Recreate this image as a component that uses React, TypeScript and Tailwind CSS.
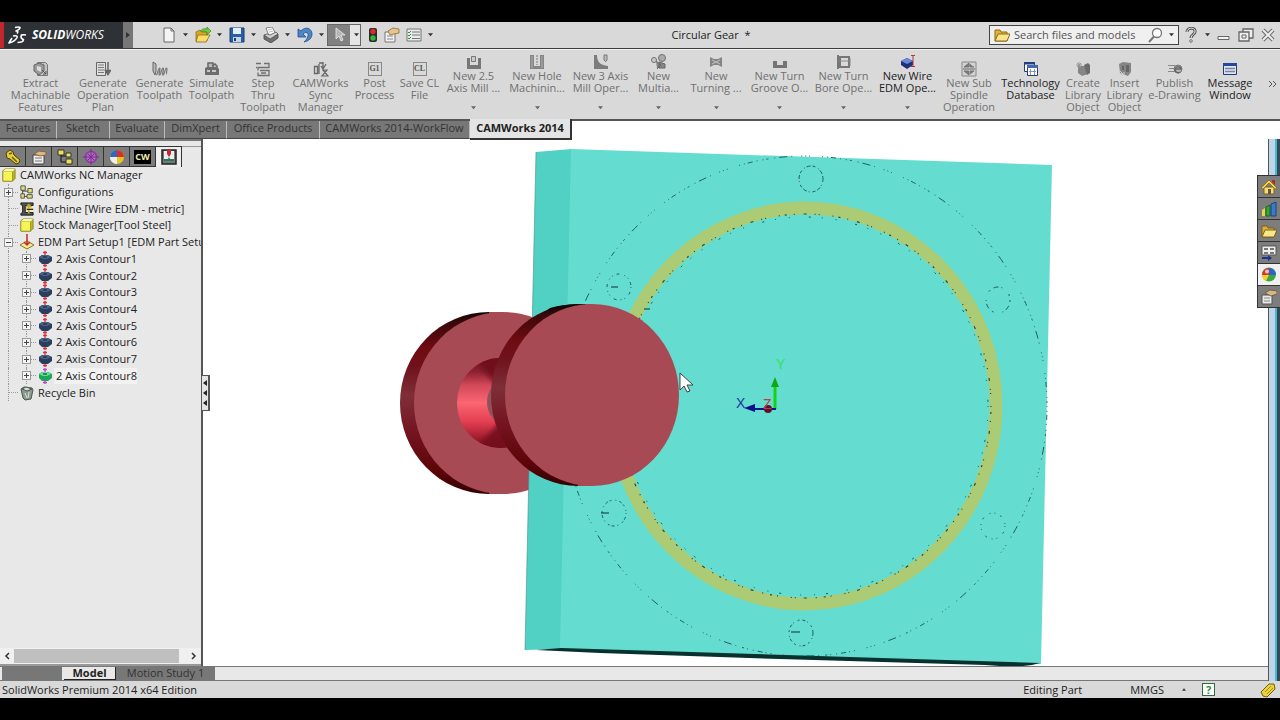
import type { ReactNode } from 'react'

type Tool = {
  icon: string
  lines: string[]
  width: string
  menu?: boolean
  enabled?: boolean
}

const tools: Tool[] = [
  { icon: 'extract', lines: ['Extract', 'Machinable', 'Features'], width: 'w-[65px]' },
  { icon: 'plan', lines: ['Generate', 'Operation', 'Plan'], width: 'w-[60px]' },
  { icon: 'toolpath', lines: ['Generate', 'Toolpath'], width: 'w-[53px]' },
  { icon: 'simulate', lines: ['Simulate', 'Toolpath'], width: 'w-[51px]' },
  { icon: 'step', lines: ['Step', 'Thru', 'Toolpath'], width: 'w-[52px]' },
  { icon: 'sync', lines: ['CAMWorks', 'Sync', 'Manager'], width: 'w-[63px]' },
  { icon: 'post', lines: ['Post', 'Process'], width: 'w-[45px]' },
  { icon: 'savecl', lines: ['Save CL', 'File'], width: 'w-[45px]' },
  { icon: 'mill25', lines: ['New 2.5', 'Axis Mill ...'], width: 'w-[63px]', menu: true },
  { icon: 'hole', lines: ['New Hole', 'Machinin...'], width: 'w-[64px]', menu: true },
  { icon: 'mill3', lines: ['New 3 Axis', 'Mill Oper...'], width: 'w-[63px]', menu: true },
  { icon: 'multi', lines: ['New', 'Multia...'], width: 'w-[53px]', menu: true },
  { icon: 'turning', lines: ['New', 'Turning ...'], width: 'w-[62px]', menu: true },
  { icon: 'groove', lines: ['New Turn', 'Groove O...'], width: 'w-[65px]', menu: true },
  { icon: 'bore', lines: ['New Turn', 'Bore Ope...'], width: 'w-[63px]', menu: true },
  { icon: 'edm', lines: ['New Wire', 'EDM Ope...'], width: 'w-[65px]', menu: true, enabled: true },
  { icon: 'spindle', lines: ['New Sub', 'Spindle', 'Operation'], width: 'w-[58px]' },
  { icon: 'database', lines: ['Technology', 'Database'], width: 'w-[65px]', enabled: true },
  { icon: 'create', lines: ['Create', 'Library', 'Object'], width: 'w-[40px]' },
  { icon: 'insert', lines: ['Insert', 'Library', 'Object'], width: 'w-[43px]' },
  { icon: 'publish', lines: ['Publish', 'e-Drawing'], width: 'w-[57px]' },
  { icon: 'message', lines: ['Message', 'Window'], width: 'w-[54px]', enabled: true },
]

const tabs = [
  { label: 'Features', width: 'w-[57px]' },
  { label: 'Sketch', width: 'w-[53px]' },
  { label: 'Evaluate', width: 'w-[55px]' },
  { label: 'DimXpert', width: 'w-[62px]' },
  { label: 'Office Products', width: 'w-[93px]' },
  { label: 'CAMWorks 2014-WorkFlow', width: 'w-[150px]' },
]

const contours = [1, 2, 3, 4, 5, 6, 7, 8]

const toolIcons: Record<string, ReactNode> = {
  extract: (
    <>
      <path d="M4.5 1.5h8l2 2v11h-10z" fill="#c4c4c4" stroke="#777" />
      <path d="M1 4l5-2 5 2v6l-5 4-5-4z" fill="#9a9a9a" stroke="#666" />
      <path d="M4 5l4 1v5l-4-2z" fill="#dcdcdc" />
      <path d="M9 9l4 4M13 10v3h-3" fill="none" stroke="#555" />
    </>
  ),
  plan: (
    <>
      <path d="M1.5 1.5h9v13h-9z" fill="#e0e0e0" stroke="#666" />
      <path d="M3 4h6M3 6.5h6M3 9h6M3 11.5h6" stroke="#777" />
      <path d="M13 1v9M10.5 9.5l2.5 4 2.5-4z" fill="#666" stroke="#666" strokeWidth="1.5" />
    </>
  ),
  toolpath: (
    <>
      <path d="M1 1v9l2 4 1-4V3z" fill="#bbb" stroke="#666" />
      <path
        d="M4 14c2 0 2-7 3.500-7s-1.500 7 0 7 2-7 3.500-7-1.500 7 0 7 2-7 3.500-7-1 6 .5 6"
        fill="none"
        stroke="#777"
        strokeWidth="1.2"
      />
    </>
  ),
  simulate: (
    <>
      <path d="M4 6V2h5v4M8 5l3-2 2 2v3" fill="#bbb" stroke="#666" strokeWidth="1.5" />
      <path d="M1 7l2-1h10l2 2v6H1z" fill="#6d6d6d" />
      <path d="M3 9h3v2H3zM8 9h4v2H8z" fill="#c8c8c8" />
    </>
  ),
  step: (
    <path
      d="M1 2.500h5M9 2.500h5v4H3v3M1 6.500h1M5 9.500h9v5H3v-3M6 12h5"
      fill="none"
      stroke="#707070"
      strokeWidth="1.3"
    />
  ),
  sync: (
    <>
      <path d="M1.500 5.500h3v7h-3zM6 3v10M6 2h4M10 1v7l-2-3M10 8l3-5" fill="none" stroke="#666" strokeWidth="1.3" />
      <path d="M9 9h5l-5 6h6l-5-6" fill="none" stroke="#666" strokeWidth="1.2" />
    </>
  ),
  mill25: (
    <>
      <path d="M1 4h3v7h8V4h3v11H1z" fill="#777" />
      <path d="M5.500 2.500h4v5h-4z" fill="#ccc" stroke="#777" />
    </>
  ),
  hole: (
    <>
      <path d="M1 1h4v11h6V1h4v14H1z" fill="#858585" />
      <path d="M8 1v10" stroke="#777" strokeDasharray="2 1" />
      <path d="M3 2v12M13 2v12" stroke="#b0b0b0" />
    </>
  ),
  mill3: (
    <>
      <path d="M1 1h3c0 7 3 10 11 11v3H1z" fill="#7c7c7c" />
      <path d="M11 1h3v5q-1 3-3 0z" fill="#bbb" stroke="#777" />
    </>
  ),
  multi: (
    <>
      <circle cx="11" cy="4" r="3.5" fill="#aaa" stroke="#707070" />
      <circle cx="3" cy="6" r="2.5" fill="#ccc" stroke="#707070" />
      <path d="M5 7l5 4-4 4M8 8l6 2v4H8z" fill="#888" stroke="#666" />
    </>
  ),
  turning: (
    <>
      <path d="M2 3l4 2h4l4-2v10l-4-2H6l-4 2z" fill="#848484" />
      <path d="M4 6l8 4M12 6l-8 4" stroke="#c4c4c4" />
    </>
  ),
  groove: <path d="M1 7h4v4h6V7h4v7H1z" fill="#747474" />,
  bore: (
    <>
      <path d="M2 1v14M4 3h9v10H4z" fill="none" stroke="#777" strokeWidth="2" />
      <path d="M3 7h10M14 4v8" stroke="#8a8a8a" />
    </>
  ),
  edm: (
    <>
      <path d="M1 7l6-3 6 3v4l-6 4-6-4z" fill="#1e2f73" />
      <path d="M1 7l6-3 6 3-6 3z" fill="#6c86d8" />
      <path d="M11 1.500h4M13 1v12M11 12.500h4" stroke="#b7303a" fill="none" />
    </>
  ),
  spindle: (
    <>
      <path d="M1 1h14v14H1z" fill="#d2d2d2" stroke="#888" />
      <path d="M8 2v4H3zM13 6H9V3M3 10h5v4zM9 10h4l-4 3" fill="#777" stroke="#777" />
      <path d="M2 8h12" stroke="#666" />
    </>
  ),
  database: (
    <>
      <path d="M1.500 1.500h10v9h-10z" fill="#fff" stroke="#263e7d" />
      <path d="M1 1h11v2.500H1z" fill="#263e7d" />
      <path d="M4.500 4.500h10v10h-10z" fill="#fff" stroke="#263e7d" />
      <path d="M4 4h11v3H4z" fill="#4566b0" />
      <path d="M7.500 8v6M11.500 8v6M6 10.500h7" stroke="#8391ba" />
    </>
  ),
  create: (
    <>
      <path d="M3 5h11l-1 8-6 2-4-3z" fill="#858585" />
      <path d="M9 4l4-2 2 2v8l-3 2z" fill="#6c6c6c" />
      <path d="M4 1v6M1 4h6M2 2l4 4M6 2L2 6" stroke="#999" />
    </>
  ),
  insert: (
    <>
      <path d="M2 3l4-2 8 1v9l-3 4-8-3z" fill="#858585" />
      <path d="M5 5h2v4H5zM9 4h3v7H9z" fill="#666" />
      <path d="M2 9l5 5M7 11v3H4" stroke="#ccc" fill="none" />
    </>
  ),
  publish: (
    <>
      <path d="M1 4.500h7M2 7.500h6M1 10.500h7" stroke="#888" />
      <circle cx="11" cy="8" r="4" fill="#b8b8b8" stroke="#777" />
      <path d="M8 8h6a3 3 0 1 0-1 3" fill="none" stroke="#666" strokeWidth="1.5" />
    </>
  ),
  message: (
    <>
      <path d="M1.500 2.500h13v11h-13z" fill="#dfe4ef" stroke="#23396f" />
      <path d="M1 2h14v3H1z" fill="#27489c" />
      <path d="M3 7.500h10M3 10.500h10" stroke="#7484a8" strokeWidth="1.5" />
    </>
  ),
}

function Icon({ children, className = 'size-4' }: { children: ReactNode; className?: string }) {
  return (
    <svg viewBox="0 0 16 16" className={`shrink-0 ${className}`} aria-hidden="true">
      {children}
    </svg>
  )
}

function Caret({ className = 'text-[#333]' }: { className?: string }) {
  return (
    <svg viewBox="0 0 6 4" className={`h-1 w-[5px] shrink-0 ${className}`} aria-hidden="true">
      <path d="M0 0h6L3 3.500z" fill="currentColor" />
    </svg>
  )
}

const quickActions: { name: string; drawing: ReactNode }[] = [
  {
    name: 'New',
    drawing: (
      <>
        <path d="M3 1h7l3 3v11H3z" fill="#f4f4f4" stroke="#666" />
        <path d="M10 1v3h3" fill="none" stroke="#666" />
      </>
    ),
  },
  {
    name: 'Open',
    drawing: (
      <>
        <path d="M1 5l4-2 2 2h5v9H1z" fill="#d9a728" stroke="#8d6a14" strokeWidth=".8" />
        <path d="M3 8h12l-4 7H1z" fill="#f8dd6d" stroke="#8d6a14" strokeWidth=".8" />
        <path d="M6 5c0-3 3-4 6-3V0l4 4-4 4V5c-2-1-4-1-6 0z" fill="#6bcb3e" stroke="#2e7d16" strokeWidth=".6" />
      </>
    ),
  },
  {
    name: 'Save',
    drawing: (
      <>
        <path d="M1 1h14v14H1z" fill="#2a5fa5" stroke="#173d72" />
        <path d="M4 1h8v6H4z" fill="#e4edf7" />
        <path d="M4 10h8v5H4z" fill="#c5d3e4" />
        <path d="M5 11h2v3H5z" fill="#173d72" />
      </>
    ),
  },
  {
    name: 'Print',
    drawing: (
      <>
        <path d="M3 1l6-1 4 7-7 2z" fill="#fff" stroke="#666" strokeWidth=".8" />
        <path d="M5 3l4-1M6 5l4-1" stroke="#aaa" strokeWidth=".8" />
        <path d="M1 8l6 3 8-4v4l-7 5-7-4z" fill="#707070" stroke="#444" strokeWidth=".8" />
        <path d="M1 8l3-1 3 1 6-3 2 2-8 5z" fill="#cfcfcf" stroke="#555" strokeWidth=".8" />
      </>
    ),
  },
  {
    name: 'Undo',
    drawing: (
      <path
        d="M1 2v8l8 0-3-3c3-3 6-1 5 2s-2 4-4 6c5-1 8-4 8-8 0-6-7-8-11-3z"
        fill="#4a86c8"
        stroke="#1d4f8d"
        strokeWidth=".8"
      />
    ),
  },
]

function TitleBar() {
  return (
    <header className="flex h-[27px] shrink-0 items-center border-b border-[#3c3c3c] bg-[#d9d9d9]">
      <div className="flex h-full w-[123px] shrink-0 items-center border-l-4 border-[#c1272d] bg-[#2e3236] text-white">
        <svg viewBox="0 0 20 20" className="ml-1 size-5 shrink-0" aria-hidden="true">
          <path
            d="M7 2.500q4-1 5 0q0 2-4 3.500q3 0 1 2.500M5 11q5-1 4 1.500q-2 4-8 5.500l3-5M18 10q-5-1-5 1.500t2.500 3q0 3-6 3"
            fill="none"
            stroke="#fff"
            strokeWidth="1.6"
            strokeLinejoin="round"
          />
        </svg>
        <span className="ml-1 text-[12px] italic">
          <b>SOLID</b>WORKS
        </span>
      </div>
      <button className="flex h-full w-[10px] shrink-0 items-center justify-center bg-[#777]" aria-label="Show menu">
        <svg viewBox="0 0 4 6" className="h-1.5 w-1">
          <path d="M0 0l4 3-4 3z" fill="#333" />
        </svg>
      </button>
      <div className="ml-7 flex h-full shrink-0 items-center">
        {quickActions.map((a) => (
          <button key={a.name} aria-label={a.name} className="flex w-[34px] items-center gap-1.5">
            <Icon>{a.drawing}</Icon>
            <Caret />
          </button>
        ))}
        <button
          aria-label="Select"
          className="mr-1 -ml-1 flex h-[22px] w-[34px] items-center border border-[#666] bg-[#e4e4e4]"
        >
          <span className="mr-1 flex h-full w-[22px] items-center justify-center bg-[#818181]">
            <Icon>
              <path d="M5 1v11l3-3 2 5 2-1-2-5h4z" fill="#b5b5b5" stroke="#eee" strokeWidth=".8" />
            </Icon>
          </span>
          <Caret />
        </button>
        <button aria-label="Rebuild" className="w-[19px]">
          <Icon>
            <rect x="4" y="1" width="8" height="14" rx="2" fill="#2b2b2b" />
            <circle cx="8" cy="4.5" r="2.7" fill="#d92c22" />
            <circle cx="8" cy="11" r="2.7" fill="#35b53a" />
          </Icon>
        </button>
        <button aria-label="File properties" className="w-[22px]">
          <Icon>
            <path d="M1 5h10v10H1z" fill="#f2f2f2" stroke="#777" />
            <path d="M3 9h6M3 12h6" stroke="#888" />
            <path d="M4 4l5-3 6 1v4l-5 1-4 1z" fill="#e7c58a" stroke="#8d6a35" strokeWidth=".8" />
          </Icon>
        </button>
        <button aria-label="Options" className="flex items-center gap-1.5">
          <Icon>
            <path d="M1 2h14v12H1z" fill="#e6ecea" stroke="#777" />
            <path d="M6 5h8M6 8h8M6 11.500h8" stroke="#777" />
            <path d="M2 5l1 1 2-2M2 8l1 1 2-2M2 11l1 1 2-2" fill="none" stroke="#35903a" />
          </Icon>
          <Caret />
        </button>
      </div>
      <h1 className="flex-1 text-center text-[11px] whitespace-pre text-[#222]">Circular Gear  *</h1>
      <label className="flex h-5 w-[190px] shrink-0 items-center border border-[#444] bg-[#f0f0f0] px-1">
        <Icon>
          <path d="M1 3h5l1 2h6v9H1z" fill="#e2b537" stroke="#8d6a14" />
          <path d="M4 7h12l-3 7H1z" fill="#fbe58c" stroke="#8d6a14" />
        </Icon>
        <input
          type="text"
          aria-label="Search files and models"
          placeholder="Search files and models"
          className="ml-1 min-w-0 flex-1 bg-transparent text-[11px] outline-none placeholder:text-[#555]"
        />
        <Icon>
          <circle cx="10" cy="6" r="4.5" fill="#fff" stroke="#777" strokeWidth="1.3" />
          <path d="M7 9.500L2 15" stroke="#777" strokeWidth="2" />
        </Icon>
        <Caret className="ml-1.5 text-[#333]" />
      </label>
      <div className="flex w-[101px] shrink-0 items-center gap-1.5 pl-1">
        <button aria-label="Help" className="flex items-center gap-1.5">
          <Icon>
            <path d="M4 5c0-5 9-5 8 0 0 2-4 3-4 6" fill="none" stroke="#555" strokeWidth="3" />
            <path d="M4 5c0-5 9-5 8 0 0 2-4 3-4 6" fill="none" stroke="#eee" />
            <circle cx="8" cy="14" r="1.3" fill="#eee" stroke="#555" strokeWidth=".8" />
          </Icon>
          <Caret />
        </button>
        <button aria-label="Minimize">
          <Icon>
            <path d="M2 9.500h11v3H2z" fill="#f4f4f4" stroke="#666" />
          </Icon>
        </button>
        <button aria-label="Restore">
          <Icon>
            <path d="M5 2h10v9H5z" fill="#eee" stroke="#666" strokeWidth="1.3" />
            <path d="M1 5h10v9H1z" fill="#eee" stroke="#666" strokeWidth="1.3" />
            <path d="M4 8h4v3H4z" fill="none" stroke="#666" />
          </Icon>
        </button>
        <button aria-label="Close">
          <Icon>
            <path d="M3 3l10 10M13 3L3 13" stroke="#666" strokeWidth="4" />
            <path d="M3 3l10 10M13 3L3 13" stroke="#eee" strokeWidth="2" />
          </Icon>
        </button>
      </div>
    </header>
  )
}

function ToolButton({ tool }: { tool: Tool }) {
  const badge = tool.icon === 'post' ? 'G1' : tool.icon === 'savecl' ? 'CL' : null
  return (
    <button
      className={`flex shrink-0 flex-col items-center text-[11px] leading-[12px] ${tool.width} ${
        tool.menu ? 'pt-1' : 'pt-[11px]'
      } ${tool.enabled ? 'text-[#222]' : 'text-[#707070]'}`}
    >
      {badge ? (
        <span className="my-px flex size-3.5 items-center justify-center border border-[#888] font-['Liberation_Serif'] text-[8px] font-bold text-[#555]">
          {badge}
        </span>
      ) : (
        <Icon>{toolIcons[tool.icon]}</Icon>
      )}
      {tool.lines.map((line) => (
        <span key={line} className="whitespace-nowrap">
          {line}
        </span>
      ))}
      {tool.menu && <Caret className="mt-3 text-[#666]" />}
    </button>
  )
}

function Ribbon() {
  return (
    <div className="flex h-[70px] shrink-0 items-stretch overflow-hidden border-t border-[#f2f2f2] bg-[#d9d9d9] pl-2">
      {tools.map((t) => (
        <ToolButton key={t.icon} tool={t} />
      ))}
      <button aria-label="More commands" className="ml-auto flex w-3 items-start pt-[30px]">
        <svg viewBox="0 0 10 8" className="h-2 w-2.5">
          <path d="M1 1l3 3-3 3M5 1l3 3-3 3" fill="none" stroke="#555" />
        </svg>
      </button>
    </div>
  )
}

function CommandTabs() {
  return (
    <nav className="flex h-5 shrink-0 border-t-2 border-[#555] bg-white text-[11px] text-[#333]">
      {tabs.map((t) => (
        <button
          key={t.label}
          className={`flex shrink-0 justify-center border-r border-b border-r-[#bbb] border-b-[#444] bg-[#777] leading-[14px] whitespace-nowrap ${t.width}`}
        >
          {t.label}
        </button>
      ))}
      <button className="relative z-10 -mt-0.5 flex h-[21px] w-[102px] shrink-0 justify-center border-r-2 border-b-2 border-[#333] bg-[#e4e4e4] leading-[17px] font-bold text-[#222]">
        CAMWorks 2014
      </button>
    </nav>
  )
}

const cube = (
  <>
    <path d="M1 3l3-2h11v11l-3 3H1z" fill="#b8b42c" stroke="#77741a" strokeWidth=".8" />
    <path d="M1 4h11v11H1z" fill="#f7f556" stroke="#8a871d" strokeWidth=".8" />
    <path d="M1 4l3-3h11l-3 3z" fill="#fcfba0" />
  </>
)

const managerTabs: { name: string; drawing: ReactNode }[] = [
  {
    name: 'FeatureManager',
    drawing: (
      <>
        <path d="M1 4l4-3 3 2 1 3 6 5-1 3-3 1-6-5-3-1z" fill="#e9cf38" stroke="#4b400a" />
        <path d="M4 5l3-1M7 8l5 5" stroke="#6b5c0d" strokeWidth="1.5" />
      </>
    ),
  },
  {
    name: 'PropertyManager',
    drawing: (
      <>
        <path d="M2 6h11v9H2z" fill="#eee" stroke="#444" />
        <path d="M4 9h7M4 12h7" stroke="#777" />
        <path d="M3 5l5-3 7 1v3l-6 1z" fill="#ddb682" stroke="#7c5a2b" strokeWidth=".8" />
      </>
    ),
  },
  {
    name: 'ConfigurationManager',
    drawing: (
      <>
        <path d="M4 4v9h6M4 7h7" fill="none" stroke="#111" />
        <path d="M1 1h6v5H1zM9 4h5v4H9zM9 10h6v5H9z" fill="#ece25a" stroke="#333" />
      </>
    ),
  },
  {
    name: 'DimXpertManager',
    drawing: (
      <>
        <circle cx="8" cy="8" r="5.5" fill="#b56ac2" stroke="#8b3ba0" strokeWidth="1.5" />
        <path d="M8 0v16M0 8h16M5 5l6 6M11 5l-6 6" stroke="#7a2d90" />
      </>
    ),
  },
  {
    name: 'DisplayManager',
    drawing: (
      <>
        <circle cx="8" cy="8" r="7" fill="#e6c527" />
        <path d="M8 8L1 8a7 7 0 0 1 7-7z" fill="#2d67c7" />
        <path d="M8 8V1a7 7 0 0 1 7 7z" fill="#d92f27" />
        <path d="M8 8H1a7 7 0 0 0 7 7z" fill="#eee" />
      </>
    ),
  },
  { name: 'CAMWorks Feature Tree', drawing: null },
  {
    name: 'CAMWorks Operation Tree',
    drawing: (
      <>
        <path d="M1 1h14v14H1z" fill="#777" stroke="#222" strokeWidth="1.5" />
        <path d="M3 2h10v9H3z" fill="#eee" />
        <path d="M6 1h4v4L8 8 6 5z" fill="#cc2633" />
        <path d="M3 12h10v-2H9L8 8 7 10H3z" fill="#1f7a59" />
      </>
    ),
  },
]

function TreeIcon({ kind }: { kind: string }) {
  if (kind === 'cube') return <Icon className="size-3.5">{cube}</Icon>
  if (kind === 'config')
    return (
      <Icon className="size-3.5">
        <path d="M3 5v8h5M3 7h6" fill="none" stroke="#333" />
        <path d="M1 1h5v5H1zM9 4h5v5H9zM8 11h6v4H8zM1 10h4v5H1z" fill="#dfe07a" stroke="#444" />
      </Icon>
    )
  if (kind === 'machine')
    return (
      <Icon className="size-3.5">
        <path d="M15 1H1v2l2 1v8l-2 1v2h14v-3H6V4h9z" fill="#555" stroke="#111" />
        <path d="M10 3v10M7 8h8M7 6l3-3 3 3" fill="none" stroke="#c4ad22" strokeWidth="2" />
        <path d="M8 8.500h7" stroke="#111" />
      </Icon>
    )
  if (kind === 'setup')
    return (
      <Icon className="size-4">
        <path d="M1 11l7-4 7 4-7 4z" fill="#f8ee9a" stroke="#8b7420" />
        <path d="M8 0v11M5 8l3 3 3-3" fill="none" stroke="#c62a20" strokeWidth="1.5" />
      </Icon>
    )
  if (kind === 'bin')
    return (
      <Icon className="size-4">
        <path d="M2 4l3-2 8 1 1 2-2 9-6 1-2-2z" fill="#8b9a8e" stroke="#4b574d" />
        <path d="M3 4l4-2 6 2-5 2z" fill="#d7ded7" stroke="#4b574d" />
        <path d="M6 8l2 5M10 7l-1 6" stroke="#dce5dc" />
      </Icon>
    )
  const fresh = kind === 'contour-new'
  return (
    <Icon className="size-4">
      <path d="M8 0v16M6 1.500h4M6 14.500h4" stroke={fresh ? '#c243c9' : '#d43340'} strokeWidth="1.3" />
      <path d="M2 6l3-2h6l4 2v4l-4 3H5l-3-3z" fill={fresh ? '#22a35a' : '#2b3f5c'} />
      <path d="M2 6l4-2h4l4 2-4 2H6z" fill={fresh ? '#5fe494' : '#4a6388'} />
      <path d="M6 6h4" stroke="#152034" />
    </Icon>
  )
}

type Row = { label: string; kind: string; depth: number; toggle?: '+' | '-' }

const rows: Row[] = [
  { label: 'CAMWorks NC Manager', kind: 'cube', depth: 0 },
  { label: 'Configurations', kind: 'config', depth: 1, toggle: '+' },
  { label: 'Machine [Wire EDM - metric]', kind: 'machine', depth: 1 },
  { label: 'Stock Manager[Tool Steel]', kind: 'cube', depth: 1 },
  { label: 'EDM Part Setup1 [EDM Part Setup', kind: 'setup', depth: 1, toggle: '-' },
  ...contours.map((n): Row => ({
    label: `2 Axis Contour${n}`,
    kind: n === 8 ? 'contour-new' : 'contour',
    depth: 2,
    toggle: '+',
  })),
  { label: 'Recycle Bin', kind: 'bin', depth: 1 },
]

function TreeRow({ row }: { row: Row }) {
  const gutters = Array.from({ length: row.depth })
  return (
    <li className="flex min-h-0 items-center">
      {gutters.map((_, i) => (
        <span key={i} className="relative flex h-full w-[18px] shrink-0 items-center pl-1">
          <span className="absolute inset-y-0 left-2 border-l border-dotted border-[#999]" />
          {i === row.depth - 1 && <span className="absolute left-2 w-2.5 border-t border-dotted border-[#999]" />}
          {i === row.depth - 1 && row.toggle && (
            <button
              aria-label={row.toggle === '+' ? 'Expand' : 'Collapse'}
              className="relative flex size-[9px] items-center justify-center border border-[#999] bg-[#f4f4f4]"
            >
              <svg viewBox="0 0 5 5" className="size-[5px]">
                <path d={row.toggle === '+' ? 'M0 2.500h5M2.500 0v5' : 'M0 2.500h5'} stroke="#444" />
              </svg>
            </button>
          )}
        </span>
      ))}
      <span className="flex w-[18px] shrink-0 justify-center">
        <TreeIcon kind={row.kind} />
      </span>
      <span className={`pl-0.5 whitespace-nowrap ${row.kind === 'contour-new' ? 'bg-[#f2f2f2]' : ''}`}>
        {row.label}
      </span>
    </li>
  )
}

function ManagerPanel() {
  return (
    <aside className="relative z-10 flex w-[203px] shrink-0 flex-col border-r-2 border-[#555] bg-[#e8e8e8]">
      <div className="flex h-7 shrink-0 items-end border-t-2 border-[#777]">
        {managerTabs.map((t, i) => (
          <button
            key={t.name}
            aria-label={t.name}
            className={`flex h-[21px] w-[26px] items-center justify-center border-t border-r border-[#333] ${
              i === 6 ? 'bg-[#efefef]' : 'border-b bg-[#7c7c7c]'
            }`}
          >
            {t.drawing ? (
              <Icon className="size-4">{t.drawing}</Icon>
            ) : (
              <span className="bg-black px-px text-[9px] leading-[14px] font-bold text-[#f0f0b0]">CW</span>
            )}
          </button>
        ))}
        <span className="h-[21px] flex-1 border-t border-[#999]" />
      </div>
      <ul className="grid h-[234px] shrink-0 grid-rows-14 overflow-hidden text-[11px] leading-4 text-[#222]">
        {rows.map((r) => (
          <TreeRow key={r.label} row={r} />
        ))}
      </ul>
      <div className="mt-auto flex h-[18px] items-center border-b-2 border-[#999] bg-[#f0f0f0]">
        <button aria-label="Scroll left" className="flex w-3.5 justify-center">
          <svg viewBox="0 0 6 8" className="h-2 w-1.5">
            <path d="M5 1L2 4l3 3" fill="none" stroke="#333" strokeWidth="1.5" />
          </svg>
        </button>
        <span className="mr-2 h-3.5 flex-1 bg-[#bfbfbf]" />
        <button aria-label="Scroll right" className="flex w-3.5 justify-center">
          <svg viewBox="0 0 6 8" className="h-2 w-1.5">
            <path d="M1 1l3 3-3 3" fill="none" stroke="#333" strokeWidth="1.5" />
          </svg>
        </button>
      </div>
      <button
        aria-label="Collapse panel"
        className="absolute top-[236px] -right-[9px] flex h-9 w-2 flex-col items-center justify-around border-y border-r-2 border-[#555] bg-[#e4e4e4] py-0.5"
      >
        {[0, 1, 2].map((n) => (
          <svg key={n} viewBox="0 0 4 6" className="h-1.5 w-1">
            <path d="M4 0v6L0 3z" fill="#222" />
          </svg>
        ))}
      </button>
    </aside>
  )
}

const holes = [
  { x: 811, y: 179, dash: '3 3 1 2 4 2' },
  { x: 998, y: 300, dash: '2 4 5 3 1 9' },
  { x: 993, y: 526, dash: '1 5 2 7 1 4' },
  { x: 801, y: 633, dash: '3 2 1 4 2 3' },
  { x: 614, y: 513, dash: '1 3 3 2 2 4' },
  { x: 619, y: 287, dash: '1 4 3 5 1 3' },
]

function ModelView() {
  return (
    <svg
      viewBox="203 139 1065 527"
      preserveAspectRatio="xMidYMid slice"
      className="absolute inset-0 h-full w-full"
      role="img"
      aria-label="Gear blank with wire guides"
    >
      <defs>
        <linearGradient id="rim" x1="0" y1="0" x2="0" y2="1">
          <stop offset="0" stopColor="#120809" />
          <stop offset=".06" stopColor="#3a080b" />
          <stop offset=".2" stopColor="#6f0b12" />
          <stop offset=".3" stopColor="#70121b" />
          <stop offset=".46" stopColor="#7f2e38" />
          <stop offset=".66" stopColor="#74141f" />
          <stop offset=".88" stopColor="#5c0408" />
          <stop offset="1" stopColor="#300204" />
        </linearGradient>
        <linearGradient id="neck" x1="0" y1="0" x2="0" y2="1">
          <stop offset="0" stopColor="#6d0f19" />
          <stop offset=".2" stopColor="#8d2230" />
          <stop offset=".32" stopColor="#d2495a" />
          <stop offset=".48" stopColor="#fb6672" />
          <stop offset=".65" stopColor="#e43f53" />
          <stop offset=".8" stopColor="#a01e2f" />
          <stop offset="1" stopColor="#6b0c16" />
        </linearGradient>
        <clipPath id="hub">
          <ellipse cx="500" cy="403" rx="43" ry="45" />
        </clipPath>
        <filter id="soften" x="-20%" y="-20%" width="140%" height="140%">
          <feGaussianBlur stdDeviation="2" />
        </filter>
      </defs>

      {/* rear guide, partly hidden by the block */}
      <ellipse cx="489" cy="403" rx="89" ry="91" fill="url(#rim)" />
      <path d="M489 312h14v182h-14z" fill="#a84a54" />
      <ellipse cx="503" cy="403" rx="89" ry="91" fill="#a84a54" />
      <g clipPath="url(#hub)">
        <path d="M450 350h100v110H450z" fill="url(#neck)" />
        <path d="M466 350l40 46V350zM464 460l44-46v46z" fill="#6f0f1b" opacity=".85" filter="url(#soften)" />
        <ellipse cx="503" cy="402" rx="16" ry="21" fill="#8f5258" />
      </g>

      <path d="M536 152L572 149L561 649L525 650z" fill="#50d1c3" />
      <path d="M571 149L1052 165L1041 664L560 649z" fill="#64ddd0" />
      <path d="M536 650L561 648L1040 663L1032 665L1014 667L985 665L780 659L600 653z" fill="#07312f" />
      <path d="M536 152L525 650" stroke="#4d8b85" strokeWidth=".6" />

      <ellipse cx="805" cy="406" rx="191" ry="198" fill="none" stroke="#abcb74" strokeWidth="13" />
      <g fill="none" stroke="#174d55">
        <ellipse
          cx="805"
          cy="406"
          rx="242"
          ry="250"
          strokeDasharray="1 4 1 3 5 4 1 5 1 3 2 6 1 4 8 4 1 9 1 3 1 3 1 12"
          strokeWidth=".9"
        />
        <ellipse cx="805" cy="406" rx="186" ry="192" strokeDasharray="1 5 2 7 1 9 3 8 1 3 1 13" strokeWidth="1.2" />
        <ellipse cx="805" cy="406" rx="183" ry="189" strokeDasharray="1 13 1 19 2 11" />
        {holes.map((h) => (
          <ellipse key={h.x} cx={h.x} cy={h.y} rx="12" ry="13" strokeDasharray={h.dash} strokeWidth=".9" />
        ))}
        <path d="M611 287h7M601 513h8M791 632h9M644 309h6" stroke="#0c2f38" />
      </g>

      {/* front guide */}
      <ellipse cx="578" cy="395" rx="87" ry="91" fill="url(#rim)" />
      <path d="M578 304h14v182h-14z" fill="#a84a54" />
      <path d="M550 308q12-4 36-4l-4 3q-20 0-36 4z" fill="#120809" />
      <ellipse cx="592" cy="395" rx="87" ry="91" fill="#a84a54" />

      {/* origin triad */}
      <path d="M775 409V384" stroke="#12d512" strokeWidth="3" />
      <path d="M775 377l4 10h-8z" fill="#0fa80f" />
      <path d="M776 409H752" stroke="#10108c" strokeWidth="2" />
      <path d="M744 408l11-4v8z" fill="#10108c" />
      <circle cx="768" cy="409" r="4" fill="#5c1030" />
      <g className="font-['Liberation_Sans'] text-[14px]">
        <text x="736" y="408" fill="#173a9c">X</text>
        <text x="776" y="369" fill="#2fe35f">Y</text>
        <text x="763" y="409" fill="#c33a3a">Z</text>
      </g>

      <path d="M680 373v17l4-4 3 6 3-1-3-6h6z" fill="#fff" stroke="#333" strokeWidth=".9" />
    </svg>
  )
}

const paneIcons: { name: string; drawing: ReactNode }[] = [
  {
    name: 'Resources',
    drawing: (
      <>
        <path d="M3 8h10v7H3z" fill="#f6dc76" stroke="#7b6216" />
        <path d="M0 9l8-8 8 8-2 1-6-6-6 6z" fill="#f5cf4d" stroke="#7b6216" strokeWidth=".7" />
        <path d="M11 1h3v5l-3-3z" fill="#b32a22" />
        <path d="M7 10h3v5H7z" fill="#654" />
      </>
    ),
  },
  {
    name: 'Design library',
    drawing: (
      <>
        <path d="M1 9l3-2v8H1z" fill="#e5d83f" />
        <path d="M5 6l4-2v11H5z" fill="#35a63c" stroke="#1e6324" />
        <path d="M10 3l5-2v14h-5z" fill="#3d79c4" stroke="#1e4579" />
      </>
    ),
  },
  {
    name: 'File explorer',
    drawing: (
      <>
        <path d="M1 3h5l1 2h6v9H1z" fill="#dfb137" stroke="#7b6216" />
        <path d="M4 7h12l-3 7H1z" fill="#fbe58c" stroke="#7b6216" />
      </>
    ),
  },
  {
    name: 'View palette',
    drawing: (
      <>
        <path d="M1 1h14v9H1z" fill="#eee" stroke="#555" />
        <path d="M3 3h4v2H3zM9 3h4v2H9zM3 7h4v2H3zM9 7h4v2H9z" fill="#777" />
        <path d="M1 12h6v-2l4 3-4 3v-2H1z" fill="#18358e" />
      </>
    ),
  },
  {
    name: 'Appearances',
    drawing: (
      <>
        <circle cx="8" cy="7.5" r="7" fill="#3ba83f" />
        <path d="M8 8L1 8a7 7 0 0 1 7-7z" fill="#e0332b" />
        <path d="M8 8V1a7 7 0 0 1 7 7z" fill="#2b62cc" />
        <path d="M8 8H1a7 7 0 0 0 4 6z" fill="#eed22f" />
        <circle cx="6" cy="4.5" r="2" fill="#fff" opacity=".7" />
      </>
    ),
  },
  {
    name: 'Custom properties',
    drawing: (
      <>
        <path d="M1 6h10v9H1z" fill="#e8e8e8" stroke="#555" />
        <path d="M3 9h6M3 12h6" stroke="#888" />
        <path d="M4 4l5-3 7 1v3l-6 2z" fill="#d6b78c" stroke="#6b5434" strokeWidth=".8" />
      </>
    ),
  },
]

function TaskPane() {
  return (
    <div className="relative z-10 flex w-3 shrink-0 border-l border-[#555] bg-[#c2d4ea]">
      <span className="ml-auto w-[5px] border-l-2 border-[#35c2cf] bg-[#3c4658]" />
      <div className="absolute top-[36px] right-0 flex w-[23px] flex-col border-t border-l border-[#333]">
        {paneIcons.map((p) => (
          <button
            key={p.name}
            aria-label={p.name}
            className={`flex h-[22px] items-center justify-center border-b border-[#333] ${
              p.name === 'Appearances' ? 'bg-[#f0f0f0]' : 'bg-[#7d7d7d]'
            }`}
          >
            <Icon>{p.drawing}</Icon>
          </button>
        ))}
      </div>
    </div>
  )
}

function StatusBar() {
  return (
    <footer className="flex h-[17px] shrink-0 items-center bg-[#d9d9d9] pr-1 pl-0.5 text-[11px] leading-[17px] text-[#222]">
      <span>SolidWorks Premium 2014 x64 Edition</span>
      <span className="mr-12 ml-auto">Editing Part</span>
      <button className="flex items-center gap-[18px]">
        MMGS
        <svg viewBox="0 0 6 4" className="h-[3px] w-1">
          <path d="M0 4h6L3 0z" fill="#333" />
        </svg>
      </button>
      <button
        aria-label="Quick tips"
        className="ml-4 flex size-[13px] items-center justify-center border border-[#2b6d3b] bg-white text-[11px] leading-none font-bold text-[#1f9438]"
      >
        ?
      </button>
      <button aria-label="Tags" className="ml-[45px]">
        <Icon>
          <path d="M1 10l8-8 5 0 1 5-8 8-4-1z" fill="#ecd23c" stroke="#6d5c10" />
          <path d="M5 10l6-6M7 12l6-6" stroke="#a38c1e" />
        </Icon>
      </button>
    </footer>
  )
}

export default function App() {
  return (
    <div className="flex h-screen flex-col bg-black py-[22px] font-['Open_Sans','Noto_Sans',sans-serif]">
      <TitleBar />
      <Ribbon />
      <CommandTabs />
      <div className="flex min-h-0 flex-1">
        <div className="flex min-w-0 flex-1 flex-col">
          <main className="flex min-h-0 flex-1">
            <ManagerPanel />
            <section className="relative min-w-0 flex-1 overflow-hidden bg-white">
              <ModelView />
            </section>
          </main>
          <nav className="flex h-[15px] shrink-0 border-t border-b border-[#777] bg-[#e8e8e8] text-[11px] leading-[12px] text-[#333]">
            <span className="w-16 border-r-2 border-l-2 border-[#e8e8e8] bg-[#777]" />
            <button className="flex w-[52px] justify-center border-r border-b border-[#222] font-bold text-[#222]">
              Model
            </button>
            <button className="flex w-[99px] justify-center bg-[#777] whitespace-nowrap text-[#333]">
              Motion Study 1
            </button>
          </nav>
        </div>
        <TaskPane />
      </div>
      <StatusBar />
    </div>
  )
}
